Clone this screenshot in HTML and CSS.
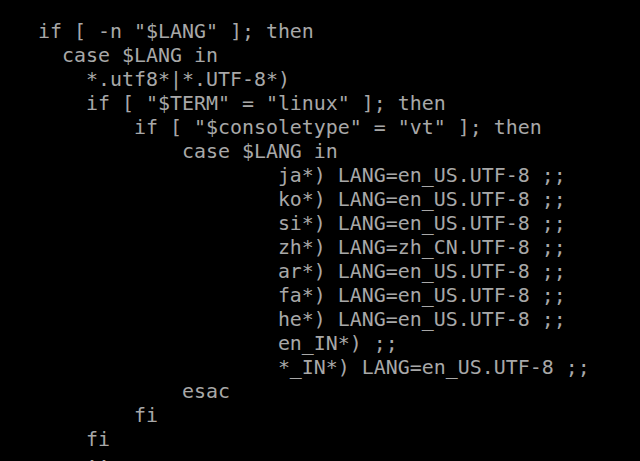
FILE: index.html
```html
<!DOCTYPE html>
<html lang="en">
<head>
<meta charset="utf-8">
<title>console</title>
<link rel="stylesheet" href="styles.css">
</head>
<body>
<pre class="console">if [ -n "$LANG" ]; then
  case $LANG in
    *.utf8*|*.UTF-8*)
    if [ "$TERM" = "linux" ]; then
        if [ "$consoletype" = "vt" ]; then
            case $LANG in
                    ja*) LANG=en_US.UTF-8 ;;
                    ko*) LANG=en_US.UTF-8 ;;
                    si*) LANG=en_US.UTF-8 ;;
                    zh*) LANG=zh_CN.UTF-8 ;;
                    ar*) LANG=en_US.UTF-8 ;;
                    fa*) LANG=en_US.UTF-8 ;;
                    he*) LANG=en_US.UTF-8 ;;
                    en_IN*) ;;
                    *_IN*) LANG=en_US.UTF-8 ;;
            esac
        fi
    fi
    ;;
</pre>
</body>
</html>
```
FILE: styles.css
```css
html, body {
  margin: 0;
  padding: 0;
  background: #000;
  height: 100%;
  overflow: hidden;
}

.console {
  margin: 0;
  padding: 20px 0 0 38px;
  font-family: "DejaVu Sans Mono", "Liberation Mono", monospace;
  font-size: 19.93px;
  line-height: 24px;
  color: #a8a8a8;
  white-space: pre;
}
```
